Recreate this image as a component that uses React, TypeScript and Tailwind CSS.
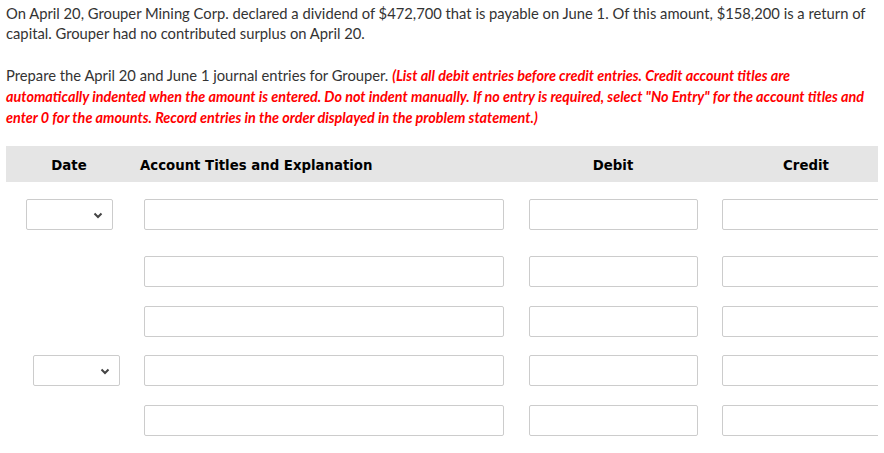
import React from "react";

function Chevron() {
  return (
    <svg width="10" height="7" viewBox="0 0 10 7" className="absolute right-[9px] top-[12px]">
      <path d="M1.5 1.5 L5 5 L8.5 1.5" fill="none" stroke="#444" strokeWidth="2" />
    </svg>
  );
}

function DateSelect({ offset }: { offset: string }) {
  return (
    <div className={`relative h-[31px] w-[87px] rounded-[2px] border border-[#cccccc] bg-white ${offset}`}>
      <Chevron />
    </div>
  );
}

function Field({ className }: { className: string }) {
  return <div className={`h-[31px] shrink-0 rounded-[2px] border border-[#cccccc] bg-white ${className}`} />;
}

function EntryRow({ date, mt }: { date?: string; mt: string }) {
  return (
    <div className={`flex items-center ${mt}`}>
      <div className="w-[144px] shrink-0">{date && <DateSelect offset={date} />}</div>
      <Field className="w-[360px]" />
      <Field className="ml-[25px] w-[169px]" />
      <Field className="ml-[24px] w-[169px]" />
    </div>
  );
}

export default function App() {
  return (
    <div className="h-[453px] w-[884px] overflow-hidden bg-white font-['Lato',sans-serif] text-[14.75px] leading-[20px] text-[#333333]">
      <div className="w-[870px] pl-[6px] pt-[3px]">
        <p>
          On April 20, Grouper Mining Corp. declared a dividend of $472,700 that is payable on June 1. Of this amount, $158,200 is a return of
          capital. Grouper had no contributed surplus on April 20.
        </p>
        <p className="mt-[22px]">
          Prepare the April 20 and June 1 journal entries for Grouper.{" "}
          <span className="text-[14.4px] leading-[20px] font-bold italic text-[#ff0000]">
            (List all debit entries before credit entries. Credit account titles are automatically indented when the amount is entered. Do not
            indent manually. If no entry is required, select "No Entry" for the account titles and enter 0 for the amounts. Record entries in
            the order displayed in the problem statement.)
          </span>
        </p>
      </div>

      <div className="ml-[6px] mt-[18px] w-[872px] overflow-hidden">
        <div className="flex h-[36px] items-center bg-[#e5e5e5] pt-[3px] font-['DejaVu_Sans',sans-serif] text-[13.3px] font-bold text-black">
          <div className="w-[126px] shrink-0 text-center">Date</div>
          <div className="w-[372px] shrink-0 pl-[8px]">Account Titles and Explanation</div>
          <div className="w-[218px] shrink-0 text-center">Debit</div>
          <div className="w-[168px] shrink-0 text-center">Credit</div>
        </div>

        <div className="-ml-[6px]">
          <EntryRow date="ml-[26px]" mt="mt-[17px]" />
          <EntryRow mt="mt-[26px]" />
          <EntryRow mt="mt-[19px]" />
          <EntryRow date="ml-[33px]" mt="mt-[18px]" />
          <EntryRow mt="mt-[19px]" />
        </div>
      </div>
    </div>
  );
}
